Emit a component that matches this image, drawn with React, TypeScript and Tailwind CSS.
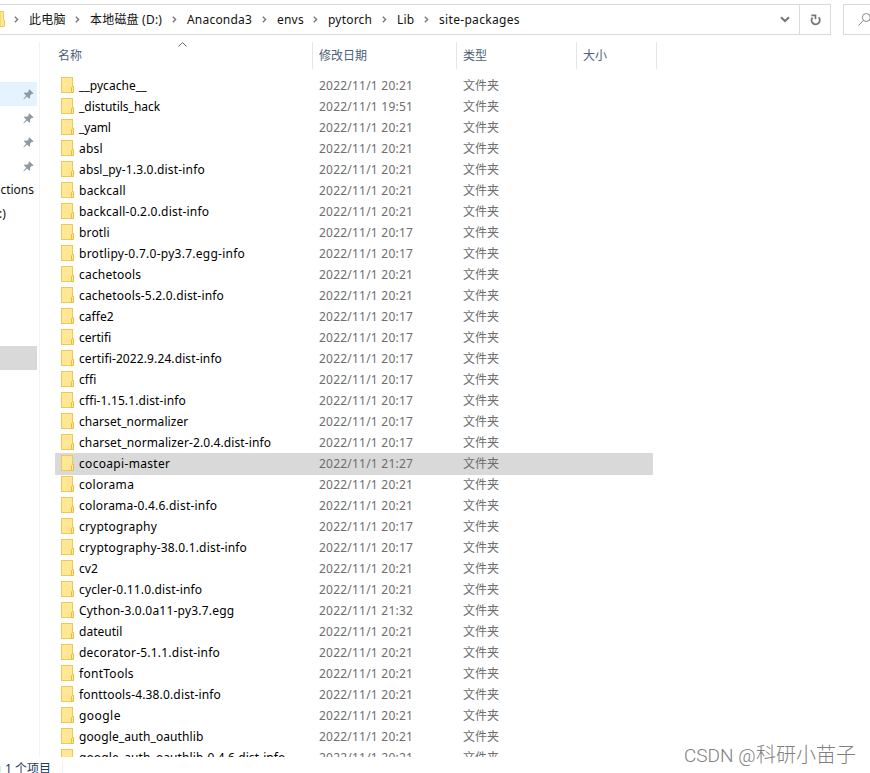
import React from "react";

type Entry = { name: string; time: string; tracking: number; selected?: boolean };

const entries: Entry[] = [
  { name: "__pycache__", time: "20:21", tracking: 0.05 },
  { name: "_distutils_hack", time: "19:51", tracking: 0 },
  { name: "_yaml", time: "20:21", tracking: -0.15 },
  { name: "absl", time: "20:21", tracking: 0.2 },
  { name: "absl_py-1.3.0.dist-info", time: "20:21", tracking: 0.17 },
  { name: "backcall", time: "20:21", tracking: 0.25 },
  { name: "backcall-0.2.0.dist-info", time: "20:21", tracking: 0.2 },
  { name: "brotli", time: "20:17", tracking: 0.15 },
  { name: "brotlipy-0.7.0-py3.7.egg-info", time: "20:17", tracking: 0.26 },
  { name: "cachetools", time: "20:21", tracking: 0.2 },
  { name: "cachetools-5.2.0.dist-info", time: "20:21", tracking: 0.17 },
  { name: "caffe2", time: "20:17", tracking: 0.05 },
  { name: "certifi", time: "20:17", tracking: 0 },
  { name: "certifi-2022.9.24.dist-info", time: "20:17", tracking: 0.11 },
  { name: "cffi", time: "20:17", tracking: 0.1 },
  { name: "cffi-1.15.1.dist-info", time: "20:17", tracking: 0.12 },
  { name: "charset_normalizer", time: "20:17", tracking: 0.06 },
  { name: "charset_normalizer-2.0.4.dist-info", time: "20:17", tracking: 0.1 },
  { name: "cocoapi-master", time: "21:27", tracking: 0.32, selected: true },
  { name: "colorama", time: "20:21", tracking: 0.3 },
  { name: "colorama-0.4.6.dist-info", time: "20:21", tracking: 0.21 },
  { name: "cryptography", time: "20:17", tracking: 0.2 },
  { name: "cryptography-38.0.1.dist-info", time: "20:17", tracking: 0.18 },
  { name: "cv2", time: "20:21", tracking: 0.1 },
  { name: "cycler-0.11.0.dist-info", time: "20:21", tracking: 0.15 },
  { name: "Cython-3.0.0a11-py3.7.egg", time: "21:32", tracking: 0.2 },
  { name: "dateutil", time: "20:21", tracking: 0.02 },
  { name: "decorator-5.1.1.dist-info", time: "20:21", tracking: 0.22 },
  { name: "fontTools", time: "20:21", tracking: 0.28 },
  { name: "fonttools-4.38.0.dist-info", time: "20:21", tracking: 0.15 },
  { name: "google", time: "20:21", tracking: 0.45 },
  { name: "google_auth_oauthlib", time: "20:21", tracking: 0.1 },
  { name: "google_auth_oauthlib-0.4.6.dist-info", time: "20:21", tracking: 0.1 },
];

const crumbs = [
  { label: "此电脑", width: "w-[61px]" },
  { label: "本地磁盘 (D:)", width: "w-[97px]" },
  { label: "Anaconda3", width: "w-[90px]" },
  { label: "envs", width: "w-[51px]" },
  { label: "pytorch", width: "w-[69px]" },
  { label: "Lib", width: "w-[42px]" },
];

const FolderIcon = () => (
  <svg className="mb-[2px] h-4 w-[13px] shrink-0" viewBox="0 0 13 16">
    <rect x="0.5" y="0.5" width="11" height="15" fill="#ffe793" stroke="#edc95a" />
    <path d="M10.5 15.5v-5l1-1h1v6z" fill="#ffe793" stroke="#e8bd45" />
  </svg>
);

const PinIcon = () => (
  <svg className="h-[11px] w-[11px]" viewBox="0 0 11 11" fill="#8f9ba3">
    <path d="M6.4 0.2l4.2 4.2-0.9 0.6-0.8-0.2-1.9 1.9 0.1 2.1-0.9 0.9-2.2-2.2L0.8 10.4 0.4 10l2.7-3.4L0.9 4.5l0.9-0.9 2.3 0.1 1.8-1.8-0.3-0.9z" />
  </svg>
);

const CrumbArrow = () => (
  <svg className="h-[7px] w-[5px] shrink-0" viewBox="0 0 5 7" fill="none" stroke="#777" strokeWidth="1.4">
    <path d="M0.8 0.7l2.8 2.8-2.8 2.8" />
  </svg>
);

const AddressBar = () => (
  <div className="mt-1 flex h-[31px] shrink-0">
    <div className="flex w-[831px] items-center border-y border-r border-[#d9d9d9]">
      <svg className="mb-px h-4 w-[5px] shrink-0" viewBox="0 0 5 16">
        <path d="M0 .5h3.5v9h1v6H0z" fill="#ffe793" stroke="#edc95a" />
      </svg>
      <div className="ml-[9px] flex items-center tracking-[0.2px]">
        {crumbs.map((c) => (
          <div key={c.label} className={`flex items-center ${c.width}`}>
            <CrumbArrow />
            <span className="ml-[10px]">{c.label}</span>
          </div>
        ))}
        <CrumbArrow />
        <span className="ml-[10px] tracking-[0.32px]">site-packages</span>
      </div>
      <div className="ml-auto flex h-full items-center">
        <svg className="mr-[9px] h-[7px] w-[10px]" viewBox="0 0 10 7" fill="none" stroke="#777" strokeWidth="2">
          <path d="M1 1.2l4 3.8 4-3.8" />
        </svg>
        <div className="flex h-full w-[31px] items-center justify-center border-l border-[#d9d9d9]">
          <svg className="ml-[2px] h-3 w-3" viewBox="0 0 12 12" fill="none" stroke="#777" strokeWidth="1.9">
            <path d="M2.5 3.6A4.1 4.1 0 1 0 8.6 3.4" />
            <path d="M1.4 1.3h4.1v4" strokeWidth="1.7" />
          </svg>
        </div>
      </div>
    </div>
    <div className="ml-3 flex flex-1 items-center overflow-hidden border-y border-l border-[#d9d9d9] pl-[14px]">
      <svg className="mb-px h-[13px] w-[13px] shrink-0" viewBox="0 0 13 13" fill="none" stroke="#888" strokeWidth="1">
        <circle cx="8.3" cy="4.5" r="4" />
        <path d="M5.4 7.4L0.5 12.5" />
      </svg>
    </div>
  </div>
);

const Sidebar = () => (
  <div className="flex w-10 shrink-0 flex-col border-r border-[#f3f3f3] pt-[40px]">
    {[0, 1, 2, 3].map((i) => (
      <div key={i} className={`flex h-6 w-[37px] items-center justify-end pr-[3px] ${i === 0 ? "bg-[#e5f3ff]" : ""}`}>
        <PinIcon />
      </div>
    ))}
    <div className="flex h-6 w-[37px] items-center justify-end overflow-hidden pr-[3px]">
      <span className="shrink-0">ctions</span>
    </div>
    <div className="flex h-6 w-[37px] items-center overflow-hidden">
      <span className="-ml-px">:)</span>
    </div>
    <div className="mt-[120px] h-6 w-[37px] bg-[#d9d9d9]" />
  </div>
);

const ListHeader = () => (
  <div className="flex h-[27px] shrink-0 items-center text-[#4c607a]">
    <div className="relative flex h-full w-[273px] items-center border-r border-[#e5e5e5] pl-[18px]">
      名称
      <svg className="absolute left-[138px] top-0 h-[5px] w-[9px]" viewBox="0 0 9 5" fill="none" stroke="#666">
        <path d="M0.5 4.4l4-3.8 4 3.8" />
      </svg>
    </div>
    <div className="flex h-full w-36 items-center border-r border-[#e5e5e5] pl-[6px]">修改日期</div>
    <div className="flex h-full w-[120px] items-center border-r border-[#e5e5e5] pl-[6px]">类型</div>
    <div className="flex h-full w-20 items-center border-r border-[#e5e5e5] pl-[6px]">大小</div>
  </div>
);

const Row = ({ name, time, tracking, selected }: Entry) => (
  <div className="h-[21px] shrink-0">
    <div className={`ml-[15px] flex h-[22px] w-[598px] items-center pl-[6px] ${selected ? "bg-[#d9d9d9]" : ""}`}>
      <FolderIcon />
      <span className="ml-[5px] w-[240px] shrink-0 text-black" style={{ letterSpacing: `${tracking}px` }}>
        {name}
      </span>
      <span className="w-36 shrink-0 tracking-[0.22px] text-[#6d6d6d]">2022/11/1 {time}</span>
      <span className="text-[#6d6d6d]">文件夹</span>
    </div>
  </div>
);

const App = () => {
  return (
    <div className="relative flex h-[773px] w-[870px] flex-col overflow-hidden bg-white font-['Noto_Sans','Noto_Sans_CJK_SC',sans-serif] text-[12px] leading-4 whitespace-nowrap text-[#111]">
      <AddressBar />
      <div className="mt-[7px] flex h-[715px] shrink-0 overflow-hidden">
        <Sidebar />
        <div className="flex flex-1 flex-col">
          <ListHeader />
          <div className="mt-[6px] flex flex-col">
            {entries.map((e) => (
              <Row key={e.name} {...e} />
            ))}
          </div>
        </div>
      </div>
      <div className="mt-[4px] flex h-4 shrink-0 items-center text-[#1e395b]">
        <span className="mr-1 h-[6px] w-px bg-[#bff3f8]" />
        1 个项目
        <span className="ml-[11px] h-full w-px bg-[#f0f0f0]" />
      </div>
      <div className="absolute left-[684px] top-[740px] flex items-baseline text-[20px] leading-7 font-light text-[#808080]">
        <span className="w-[72px] font-[Roboto,sans-serif] text-[19px]">CSDN @</span>
        <span className="font-['Noto_Sans_CJK_SC',sans-serif]">科研小苗子</span>
      </div>
    </div>
  );
};

export default App;
